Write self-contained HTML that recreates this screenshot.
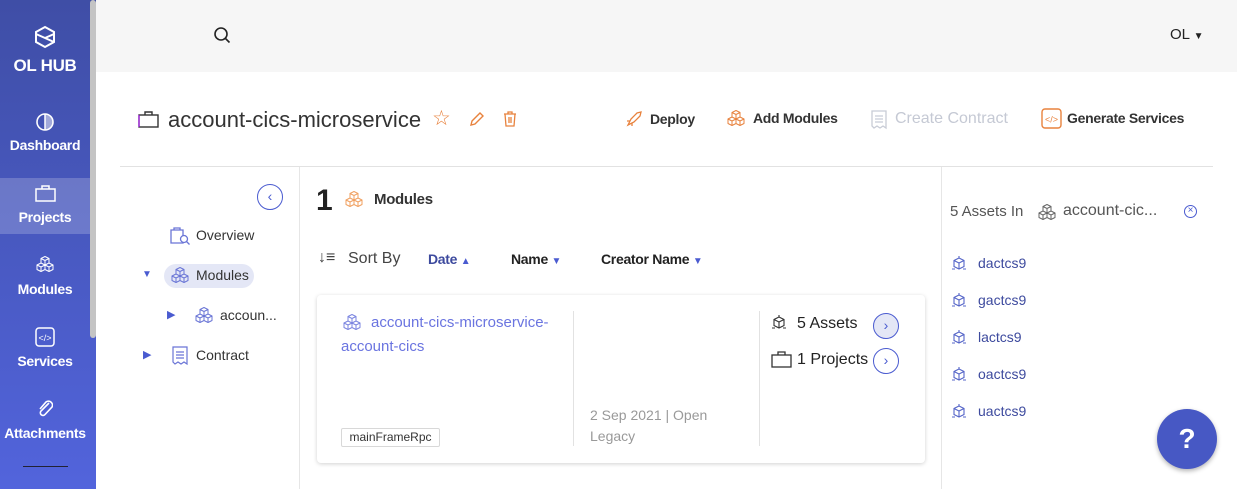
<!DOCTYPE html>
<html><head><meta charset="utf-8"><style>
*{margin:0;padding:0;box-sizing:border-box}
body{width:1237px;height:489px;overflow:hidden;background:#fff;font-family:"Liberation Sans",sans-serif;position:relative;color:#333}
.a{position:absolute;white-space:nowrap}
#sb{position:absolute;left:0;top:0;width:96px;height:489px;background:linear-gradient(#3f4ea6,#5264dc)}
#sbar{position:absolute;left:90px;top:0;width:6px;height:338px;background:#c4c4c4;border-radius:3px}
.nav{position:absolute;left:0;width:90px;text-align:center;color:#fff;font-weight:bold;font-size:14px;letter-spacing:-0.3px}
.b{font-weight:bold;letter-spacing:-0.3px}
.circ{position:absolute;border:1.5px solid #4a5bd0;border-radius:50%;color:#4a5bd0;text-align:center;font-size:14px}
</style></head><body>
<svg width="0" height="0" style="position:absolute"><defs>
<g id="cb" fill="none" stroke-width="1" stroke-linejoin="round"><path d="M9 .5L13 2.5V7L9 9L5 7V2.5Z M5 2.5L9 4.5L13 2.5M9 4.5V9 M5 7L9 9V13.5L5 15.5L1 13.5V9Z M1 9L5 11L9 9M5 11V15.5 M13 7L17 9V13.5L13 15.5L9 13.5V9Z M9 9L13 11L17 9M13 11V15.5"/></g>
<g id="ac" fill="none" stroke-width="1.1"><path d="M7 2l5 2.5v6L7 13 2 10.5v-6zM2 4.5L7 7l5-2.5M7 7v6M0 13h3M11 13h3M7 0v2"/></g>
</defs></svg>
<div id="sb"></div><div id="sbar"></div>
<svg class="a" style="left:34px;top:25px" width="22" height="24" viewBox="0 0 22 24" fill="none" stroke="#fff" stroke-width="2"><path d="M11 2l9 5v10l-9 5-9-5V7z"/><path d="M2 9l18 8M20 9L11 13"/></svg>
<div class="nav" style="top:56px;font-size:17px">OL HUB</div>
<svg class="a" style="left:35px;top:112px" width="20" height="20"><circle cx="10" cy="10" r="8" fill="none" stroke="#fff" stroke-width="1.6"/><path d="M10 2A8 8 0 0 1 10 18Z" fill="rgba(255,255,255,0.5)"/><path d="M10 2v16" stroke="#fff" stroke-width="1.5"/></svg>
<div class="nav" style="top:137px">Dashboard</div>
<div style="position:absolute;left:0;top:178px;width:90px;height:56px;background:rgba(255,255,255,0.2)"></div>
<svg class="a" style="left:35px;top:185px" width="21" height="17"><rect x="1" y="4" width="19" height="12" fill="none" stroke="#fff" stroke-width="1.5"/><path d="M7 4V1h7v3" fill="none" stroke="#fff" stroke-width="1.5"/></svg>
<div class="nav" style="top:209px">Projects</div>
<svg class="a" style="left:36px;top:256px" width="18" height="16" stroke="#fff"><use href="#cb"/></svg>
<div class="nav" style="top:281px">Modules</div>
<svg class="a" style="left:35px;top:327px" width="20" height="20"><rect x="1" y="1" width="18" height="18" rx="3" fill="none" stroke="#fff" stroke-width="1.5"/><text x="10" y="14" font-size="9" fill="#fff" text-anchor="middle" font-family="Liberation Sans">&lt;/&gt;</text></svg>
<div class="nav" style="top:353px">Services</div>
<svg class="a" style="left:37px;top:399px" width="16" height="20"><path d="M12 4L4 12a2.5 2.5 0 004 3.5l7-7.5a4 4 0 00-6-5L3 10" fill="none" stroke="#fff" stroke-width="1.6"/></svg>
<div class="nav" style="top:425px">Attachments</div>
<div class="a" style="left:23px;top:466px;width:45px;height:1px;background:#223"></div>

<div class="a" style="left:96px;top:0;width:1141px;height:72px;background:#f6f6f6"></div>
<svg class="a" style="left:213px;top:26px" width="18" height="18"><circle cx="8" cy="8" r="6" fill="none" stroke="#222" stroke-width="1.6"/><path d="M12.5 12.5l4 4" stroke="#222" stroke-width="1.6"/></svg>
<div class="a" style="left:1170px;top:26px;font-size:15px;color:#222">OL <span style="font-size:10px">▼</span></div>

<svg class="a" style="left:138px;top:111px" width="21" height="17"><rect x="1" y="4" width="19" height="12" fill="none" stroke="#333" stroke-width="1.4"/><path d="M7 4V1h7v3" fill="none" stroke="#333" stroke-width="1.4"/><path d="M1 4v12" stroke="#a0f" /></svg>
<div class="a" style="left:168px;top:107px;font-size:22px;color:#333">account-cics-microservice</div>
<div class="a" style="left:432px;top:106px;font-size:21px;color:#e8823d">☆</div>
<svg class="a" style="left:469px;top:111px" width="16" height="16"><path d="M2 14l1-4 8-8 3 3-8 8z" fill="none" stroke="#e8823d" stroke-width="1.4"/></svg>
<svg class="a" style="left:502px;top:111px" width="16" height="16"><path d="M2 3h12M6 3V1h4v2M3 3l1 12h8l1-12M7 6v6M9 6v6" fill="none" stroke="#e8823d" stroke-width="1.3"/></svg>
<svg class="a" style="left:625px;top:110px" width="18" height="18"><path d="M3 15l3-6 6-6 4-1-1 4-6 6zM5 11l-3 0M7 13v3" fill="none" stroke="#e8823d" stroke-width="1.3"/></svg>
<div class="a b" style="left:650px;top:111px;font-size:14px">Deploy</div>
<svg class="a" style="left:727px;top:110px" width="18" height="16" stroke="#e8823d"><use href="#cb"/></svg>
<div class="a b" style="left:753px;top:110px;font-size:14px">Add Modules</div>
<svg class="a" style="left:871px;top:110px" width="16" height="20"><path d="M1 1h14v17l-3-2-3 2-3-2-3 2-2-2z M4 6h8M4 9h8M4 12h8" fill="none" stroke="#c8ccd6" stroke-width="1.3"/></svg>
<div class="a" style="left:895px;top:110px;font-size:16px;color:#c5c9d4">Create Contract</div>
<svg class="a" style="left:1041px;top:108px" width="21" height="21"><rect x="1" y="1" width="19" height="19" rx="3" fill="none" stroke="#e8823d" stroke-width="1.4"/><text x="10.5" y="14.5" font-size="9" fill="#e8823d" text-anchor="middle" font-family="Liberation Sans">&lt;/&gt;</text></svg>
<div class="a b" style="left:1067px;top:110px;font-size:14px">Generate Services</div>

<div class="a" style="left:120px;top:166px;width:1093px;height:1px;background:#e2e2e2"></div>
<div class="a" style="left:299px;top:167px;width:1px;height:322px;background:#e6e6e6"></div>
<div class="a" style="left:941px;top:167px;width:1px;height:322px;background:#e6e6e6"></div>

<div class="circ" style="left:257px;top:184px;width:26px;height:26px;line-height:22px">‹</div>
<svg class="a" style="left:170px;top:227px" width="21" height="18"><path d="M1 3h12v13H1zM4 3V1h6v2" fill="none" stroke="#6a75d6" stroke-width="1.3"/><circle cx="14" cy="12" r="3.5" fill="#fff" stroke="#6a75d6" stroke-width="1.3"/><path d="M16.5 14.5l3 3" stroke="#6a75d6" stroke-width="1.3"/></svg>
<div class="a" style="left:196px;top:227px;font-size:14px">Overview</div>
<div class="a" style="left:142px;top:269px;font-size:10px;color:#4a5bd0">▼</div>
<div class="a" style="left:164px;top:264px;width:90px;height:24px;border-radius:12px;background:#e4e7f6"></div>
<svg class="a" style="left:171px;top:267px" width="18" height="16" stroke="#6a75d6"><use href="#cb"/></svg>
<div class="a" style="left:196px;top:267px;font-size:14px">Modules</div>
<div class="a" style="left:167px;top:308px;font-size:11px;color:#4a5bd0">▶</div>
<svg class="a" style="left:195px;top:307px" width="18" height="16" stroke="#6a75d6"><use href="#cb"/></svg>
<div class="a" style="left:220px;top:307px;font-size:14px">accoun...</div>
<div class="a" style="left:143px;top:348px;font-size:11px;color:#4a5bd0">▶</div>
<svg class="a" style="left:172px;top:346px" width="16" height="20"><path d="M1 1h14v17l-3-2-3 2-3-2-3 2-2-2z M4 6h8M4 9h8M4 12h8" fill="none" stroke="#6a75d6" stroke-width="1.2"/></svg>
<div class="a" style="left:196px;top:347px;font-size:14px">Contract</div>

<div class="a b" style="left:316px;top:184px;font-size:30px;color:#222">1</div>
<svg class="a" style="left:345px;top:191px" width="18" height="16" stroke="#f0a060"><use href="#cb"/></svg>
<div class="a b" style="left:374px;top:191px;font-size:15px">Modules</div>
<div class="a" style="left:318px;top:249px;font-size:16px;color:#444">↓≡</div>
<div class="a" style="left:348px;top:250px;font-size:16px;color:#444">Sort By</div>
<div class="a b" style="left:428px;top:251px;font-size:14px;color:#3d4a9e">Date <span style="font-size:10px;color:#4a5bd0">▲</span></div>
<div class="a b" style="left:511px;top:251px;font-size:14px;color:#222">Name <span style="font-size:10px;color:#4a5bd0">▼</span></div>
<div class="a b" style="left:601px;top:251px;font-size:14px;color:#222">Creator Name <span style="font-size:10px;color:#4a5bd0">▼</span></div>

<div class="a" style="left:317px;top:295px;width:608px;height:168px;border-radius:4px;box-shadow:0 1px 4px rgba(0,0,0,0.18)"></div>
<svg class="a" style="left:343px;top:314px" width="18" height="16" stroke="#7b85e0"><use href="#cb"/></svg>
<div class="a" style="left:371px;top:314px;font-size:15px;color:#6a74e0">account-cics-microservice-</div>
<div class="a" style="left:341px;top:338px;font-size:15px;color:#6a74e0">account-cics</div>
<div class="a" style="left:341px;top:428px;width:99px;height:19px;border:1px solid #d8d8d8;border-radius:2px;font-size:12px;text-align:center;line-height:17px;color:#333">mainFrameRpc</div>
<div class="a" style="left:573px;top:311px;width:1px;height:135px;background:#e2e2e2"></div>
<div class="a" style="left:759px;top:311px;width:1px;height:135px;background:#e2e2e2"></div>
<div class="a" style="left:590px;top:407px;font-size:14px;color:#999">2 Sep 2021 | Open</div>
<div class="a" style="left:590px;top:428px;font-size:14px;color:#999">Legacy</div>
<svg class="a" style="left:772px;top:315px" width="16" height="18" stroke="#333"><use href="#ac"/></svg>
<div class="a" style="left:797px;top:315px;font-size:16px;color:#222">5 Assets</div>
<div class="circ" style="left:873px;top:313px;width:26px;height:26px;line-height:22px;background:#e4e7f6">›</div>
<svg class="a" style="left:771px;top:351px" width="21" height="17"><rect x="1" y="4" width="19" height="12" fill="none" stroke="#333" stroke-width="1.3"/><path d="M7 4V1h7v3" fill="none" stroke="#333" stroke-width="1.3"/></svg>
<div class="a" style="left:797px;top:351px;font-size:16px;color:#222">1 Projects</div>
<div class="circ" style="left:873px;top:348px;width:26px;height:26px;line-height:22px">›</div>

<div class="a" style="left:950px;top:203px;font-size:15px;color:#555">5 Assets In</div>
<svg class="a" style="left:1038px;top:204px" width="18" height="16" stroke="#666"><use href="#cb"/></svg>
<div class="a" style="left:1063px;top:202px;font-size:16px;color:#555">account-cic...</div>
<div class="a" style="left:1184px;top:205px;width:13px;height:13px;border:1.3px solid #4a5bd0;border-radius:50%;font-size:10px;line-height:10px;text-align:center;color:#4a5bd0">×</div>
<svg class="a" style="left:952px;top:256px" width="16" height="16" stroke="#5565c8"><use href="#ac"/></svg><div class="a" style="left:978px;top:255px;font-size:14px;color:#3d4a9e">dactcs9</div>
<svg class="a" style="left:952px;top:293px" width="16" height="16" stroke="#5565c8"><use href="#ac"/></svg><div class="a" style="left:978px;top:292px;font-size:14px;color:#3d4a9e">gactcs9</div>
<svg class="a" style="left:952px;top:330px" width="16" height="16" stroke="#5565c8"><use href="#ac"/></svg><div class="a" style="left:978px;top:329px;font-size:14px;color:#3d4a9e">lactcs9</div>
<svg class="a" style="left:952px;top:367px" width="16" height="16" stroke="#5565c8"><use href="#ac"/></svg><div class="a" style="left:978px;top:366px;font-size:14px;color:#3d4a9e">oactcs9</div>
<svg class="a" style="left:952px;top:404px" width="16" height="16" stroke="#5565c8"><use href="#ac"/></svg><div class="a" style="left:978px;top:403px;font-size:14px;color:#3d4a9e">uactcs9</div>
<div class="a" style="left:1157px;top:409px;width:60px;height:60px;border-radius:50%;background:#4758c4;box-shadow:0 2px 5px rgba(0,0,0,0.3);color:#fff;font-size:28px;font-weight:bold;text-align:center;line-height:60px">?</div>
</body></html>
